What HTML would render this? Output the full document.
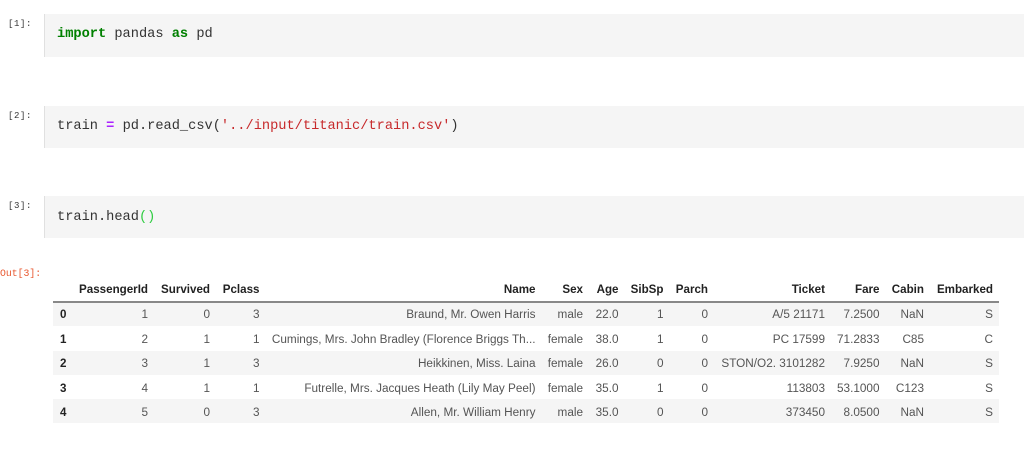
<!DOCTYPE html>
<html><head><meta charset="utf-8"><style>
html,body{margin:0;padding:0;background:#fff}
#p{position:relative;width:1024px;height:466px;overflow:hidden;background:#fff;font-family:"Liberation Sans",sans-serif}
.cell{position:absolute;left:44px;width:980px;background:#f5f5f5;border-left:1px solid #e0e0e0;box-sizing:border-box}
.code{position:absolute;left:57px;font:13.67px/18px "Liberation Mono",monospace;color:#333;white-space:pre;filter:blur(.25px)}
.pr{position:absolute;left:8px;font:9px/12px "Liberation Mono",monospace;color:#333;white-space:pre;letter-spacing:.6px}
.k{color:#008000;font-weight:bold}.o{color:#aa22ff;font-weight:bold}.s{color:#c7292b}.g{color:#2ecc40}
.row{position:absolute;left:53px;width:946px;background:#f5f5f5}
.t{position:absolute;font-size:11.75px;line-height:14px;color:#555;white-space:nowrap;transform:translateX(-100%)}
.h{font-weight:bold;color:#222;font-size:11.6px}
.i{position:absolute;left:60px;font-size:11.6px;line-height:14px;font-weight:bold;color:#222}
</style></head><body><div id="p">
<div class="cell" style="top:14px;height:43px"></div>
<div class="cell" style="top:106px;height:42px"></div>
<div class="cell" style="top:196px;height:42px"></div>
<div class="pr" style="top:18px">[1]:</div>
<div class="pr" style="top:110px">[2]:</div>
<div class="pr" style="top:200px">[3]:</div>
<div class="code" style="top:26px"><span class="k">import</span> pandas <span class="k">as</span> pd</div>
<div class="code" style="top:118px">train <span class="o">=</span> pd.read_csv(<span class="s">'../input/titanic/train.csv'</span>)</div>
<div class="code" style="top:209px">train.head<span class="g">()</span></div>
<div style="position:absolute;left:0;top:268px;font:9.8px/12px 'Liberation Mono',monospace;color:#e8572f;white-space:pre">Out[3]:</div>
<div class="row" style="top:301px;height:2px;background:#888;z-index:1"></div>
<div class="row" style="top:303px;height:23px"></div>
<div class="row" style="top:351px;height:24px"></div>
<div class="row" style="top:399px;height:24px"></div>
<span class="t h" style="left:148px;top:283px">PassengerId</span><span class="t h" style="left:210px;top:283px">Survived</span><span class="t h" style="left:259.5px;top:283px">Pclass</span><span class="t h" style="left:535.5px;top:283px">Name</span><span class="t h" style="left:583px;top:283px">Sex</span><span class="t h" style="left:618.5px;top:283px">Age</span><span class="t h" style="left:663.5px;top:283px">SibSp</span><span class="t h" style="left:708px;top:283px">Parch</span><span class="t h" style="left:825px;top:283px">Ticket</span><span class="t h" style="left:879.5px;top:283px">Fare</span><span class="t h" style="left:924px;top:283px">Cabin</span><span class="t h" style="left:993px;top:283px">Embarked</span>
<span class="i" style="top:308px">0</span><span class="t" style="left:148px;top:308px">1</span><span class="t" style="left:210px;top:308px">0</span><span class="t" style="left:259.5px;top:308px">3</span><span class="t" style="left:535.5px;top:308px">Braund, Mr. Owen Harris</span><span class="t" style="left:583px;top:308px">male</span><span class="t" style="left:618.5px;top:308px">22.0</span><span class="t" style="left:663.5px;top:308px">1</span><span class="t" style="left:708px;top:308px">0</span><span class="t" style="left:825px;top:308px">A/5 21171</span><span class="t" style="left:879.5px;top:308px">7.2500</span><span class="t" style="left:924px;top:308px">NaN</span><span class="t" style="left:993px;top:308px">S</span>
<span class="i" style="top:333px">1</span><span class="t" style="left:148px;top:333px">2</span><span class="t" style="left:210px;top:333px">1</span><span class="t" style="left:259.5px;top:333px">1</span><span class="t" style="left:535.5px;top:333px">Cumings, Mrs. John Bradley (Florence Briggs Th...</span><span class="t" style="left:583px;top:333px">female</span><span class="t" style="left:618.5px;top:333px">38.0</span><span class="t" style="left:663.5px;top:333px">1</span><span class="t" style="left:708px;top:333px">0</span><span class="t" style="left:825px;top:333px">PC 17599</span><span class="t" style="left:879.5px;top:333px">71.2833</span><span class="t" style="left:924px;top:333px">C85</span><span class="t" style="left:993px;top:333px">C</span>
<span class="i" style="top:357px">2</span><span class="t" style="left:148px;top:357px">3</span><span class="t" style="left:210px;top:357px">1</span><span class="t" style="left:259.5px;top:357px">3</span><span class="t" style="left:535.5px;top:357px">Heikkinen, Miss. Laina</span><span class="t" style="left:583px;top:357px">female</span><span class="t" style="left:618.5px;top:357px">26.0</span><span class="t" style="left:663.5px;top:357px">0</span><span class="t" style="left:708px;top:357px">0</span><span class="t" style="left:825px;top:357px">STON/O2. 3101282</span><span class="t" style="left:879.5px;top:357px">7.9250</span><span class="t" style="left:924px;top:357px">NaN</span><span class="t" style="left:993px;top:357px">S</span>
<span class="i" style="top:382px">3</span><span class="t" style="left:148px;top:382px">4</span><span class="t" style="left:210px;top:382px">1</span><span class="t" style="left:259.5px;top:382px">1</span><span class="t" style="left:535.5px;top:382px">Futrelle, Mrs. Jacques Heath (Lily May Peel)</span><span class="t" style="left:583px;top:382px">female</span><span class="t" style="left:618.5px;top:382px">35.0</span><span class="t" style="left:663.5px;top:382px">1</span><span class="t" style="left:708px;top:382px">0</span><span class="t" style="left:825px;top:382px">113803</span><span class="t" style="left:879.5px;top:382px">53.1000</span><span class="t" style="left:924px;top:382px">C123</span><span class="t" style="left:993px;top:382px">S</span>
<span class="i" style="top:406px">4</span><span class="t" style="left:148px;top:406px">5</span><span class="t" style="left:210px;top:406px">0</span><span class="t" style="left:259.5px;top:406px">3</span><span class="t" style="left:535.5px;top:406px">Allen, Mr. William Henry</span><span class="t" style="left:583px;top:406px">male</span><span class="t" style="left:618.5px;top:406px">35.0</span><span class="t" style="left:663.5px;top:406px">0</span><span class="t" style="left:708px;top:406px">0</span><span class="t" style="left:825px;top:406px">373450</span><span class="t" style="left:879.5px;top:406px">8.0500</span><span class="t" style="left:924px;top:406px">NaN</span><span class="t" style="left:993px;top:406px">S</span>
</div></body></html>
